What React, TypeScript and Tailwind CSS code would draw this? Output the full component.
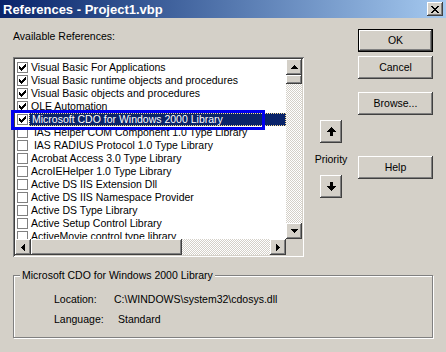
import React from "react";

// tiny pixel-art glyphs drawn as svg rects
function Pix({ rows, color = "#000", className = "" }: { rows: string[]; color?: string; className?: string }) {
  const w = rows[0].length;
  const h = rows.length;
  const rects: React.ReactNode[] = [];
  rows.forEach((r, y) =>
    r.split("").forEach((c, x) => {
      if (c === "X") rects.push(<rect key={x + "-" + y} x={x} y={y} width={1} height={1} fill={color} />);
    })
  );
  return (
    <svg width={w} height={h} viewBox={`0 0 ${w} ${h}`} shapeRendering="crispEdges" className={className}>
      {rects}
    </svg>
  );
}

const CLOSE = ["XX....XX", ".XX..XX.", "..XXXX..", "...XX...", "..XXXX..", ".XX..XX.", "XX....XX"];
const CHECK = ["......X", ".....XX", "X...XXX", "XX.XXX.", "XXXXX..", ".XXX...", "..X...."];
const UP = ["...X...", "..XXX..", ".XXXXX.", "XXXXXXX"];
const DOWN = ["XXXXXXX", ".XXXXX.", "..XXX..", "...X..."];
const LEFT = ["...X", "..XX", ".XXX", "XXXX", ".XXX", "..XX", "...X"];
const RIGHT = ["X...", "XX..", "XXX.", "XXXX", "XXX.", "XX..", "X..."];
const BIG_UP = ["....X....", "...XXX...", "..XXXXX..", ".XXXXXXX.", "XXXXXXXXX", "...XXX...", "...XXX...", "...XXX...", "...XXX..."];
const BIG_DOWN = [...BIG_UP].reverse();

const raised =
  "bg-[#d4d0c8] shadow-[inset_-1px_-1px_0_#404040,inset_1px_1px_0_#ffffff,inset_-2px_-2px_0_#808080,inset_2px_2px_0_#d4d0c8]";
const sunken =
  "shadow-[inset_1px_1px_0_#808080,inset_-1px_-1px_0_#ffffff,inset_2px_2px_0_#404040,inset_-2px_-2px_0_#d4d0c8]";
const checker = "bg-[repeating-conic-gradient(#ffffff_0_25%,#d4d0c8_0_50%)] bg-[length:2px_2px]";

function Button({ label, isDefault }: { label: string; isDefault?: boolean }) {
  if (isDefault) {
    return (
      <div className="h-[23px] w-[75px] border border-black">
        <div className={`h-full w-full flex items-center justify-center ${raised}`}>{label}</div>
      </div>
    );
  }
  return <div className={`h-[23px] w-[75px] flex items-center justify-center ${raised}`}>{label}</div>;
}

const items: { text: string; checked?: boolean; selected?: boolean }[] = [
  { text: "Visual Basic For Applications", checked: true },
  { text: "Visual Basic runtime objects and procedures", checked: true },
  { text: "Visual Basic objects and procedures", checked: true },
  { text: "OLE Automation", checked: true },
  { text: "Microsoft CDO for Windows 2000 Library", checked: true, selected: true },
  { text: "\u00a0IAS Helper COM Component 1.0 Type Library" },
  { text: "\u00a0IAS RADIUS Protocol 1.0 Type Library" },
  { text: "Acrobat Access 3.0 Type Library" },
  { text: "AcroIEHelper 1.0 Type Library" },
  { text: "Active DS IIS Extension Dll" },
  { text: "Active DS IIS Namespace Provider" },
  { text: "Active DS Type Library" },
  { text: "Active Setup Control Library" },
  { text: "ActiveMovie control type library" },
];

function ListBox() {
  return (
    <div className={`relative w-[291px] h-[200px] bg-white p-[2px] ${sunken}`}>
      <div className="flex h-[180px]">
        <div className="w-[271px] overflow-hidden pt-[2px]">
          {items.map((it, i) => (
            <div key={i} className="h-[13px] flex items-center">
              <div className="ml-[2px] w-[11px] h-[11px] border border-[#808080] bg-white flex items-center justify-center shrink-0">
                {it.checked && <Pix rows={CHECK} />}
              </div>
              <div
                className={`ml-[1px] flex-1 h-[13px] pl-[2px] whitespace-nowrap ${
                  it.selected ? "bg-[#0a246a] text-white border border-dotted border-[#f5db95] leading-[11px]" : ""
                }`}
              >
                {it.text}
              </div>
            </div>
          ))}
        </div>
        {/* vertical scrollbar */}
        <div className="w-[16px] flex flex-col">
          <div className={`h-[16px] flex items-center justify-center ${raised}`}>
            <Pix rows={UP} />
          </div>
          <div className={`h-[9px] ${raised}`} />
          <div className={`flex-1 ${checker}`} />
          <div className={`h-[16px] flex items-center justify-center ${raised}`}>
            <Pix rows={DOWN} />
          </div>
        </div>
      </div>
      {/* horizontal scrollbar */}
      <div className="flex h-[16px]">
        <div className={`w-[16px] flex items-center justify-center ${raised}`}>
          <Pix rows={LEFT} />
        </div>
        <div className={`w-[151px] ${raised}`} />
        <div className={`flex-1 ${checker}`} />
        <div className={`w-[16px] flex items-center justify-center ${raised}`}>
          <Pix rows={RIGHT} />
        </div>
        <div className="w-[16px] bg-[#d4d0c8]" />
      </div>
      {/* annotation highlight around the selected entry */}
      <div className="absolute left-[-2px] top-[53px] w-[254px] h-[20px] border-[3px] border-[#0000f0]" />
    </div>
  );
}

export default function App() {
  return (
    <div className="w-[446px] h-[352px] bg-[#d4d0c8] font-['Liberation_Sans',Arial,sans-serif] text-[10.5px] leading-[13px] text-black overflow-hidden">
      {/* title bar */}
      <div className="h-[18px] flex items-center justify-between bg-gradient-to-r from-[#0a246a] to-[#a6caf0]">
        <div className="pl-[3px] text-white font-bold text-[13px]">References - Project1.vbp</div>
        <div className={`mr-[3px] w-[16px] h-[14px] flex items-center justify-center ${raised}`}>
          <Pix rows={CLOSE} />
        </div>
      </div>

      <div className="flex px-[13px] pt-[11px]">
        <div className="w-[291px] flex flex-col">
          <div className="mt-[1px]">Available References:</div>
          <div className="mt-[14px]">
            <ListBox />
          </div>
        </div>

        <div className="w-[55px] flex flex-col items-center pt-[91px]">
          <div className={`w-[22px] h-[23px] flex items-center justify-center ${raised}`}>
            <Pix rows={BIG_UP} />
          </div>
          <div className="mt-[10px]">Priority</div>
          <div className={`mt-[9px] w-[22px] h-[23px] flex items-center justify-center ${raised}`}>
            <Pix rows={BIG_DOWN} />
          </div>
        </div>

        <div className="w-[75px] flex flex-col">
          <Button label="OK" isDefault />
          <div className="mt-[4px]">
            <Button label="Cancel" />
          </div>
          <div className="mt-[13px]">
            <Button label="Browse..." />
          </div>
          <div className="mt-[41px]">
            <Button label="Help" />
          </div>
        </div>
      </div>

      {/* group box */}
      <div className="relative mx-[13px] mt-[18px] h-[63px] border border-[#808080] shadow-[1px_1px_0_#ffffff,inset_1px_1px_0_#ffffff] pl-[40px] pt-[17px]">
        <div className="absolute top-[-7px] left-[6px] px-[2px] bg-[#d4d0c8]">Microsoft CDO for Windows 2000 Library</div>
        <div className="flex">
          <div className="w-[60px]">Location:</div>
          <div>C:\WINDOWS\system32\cdosys.dll</div>
        </div>
        <div className="flex mt-[7px]">
          <div className="w-[64px]">Language:</div>
          <div>Standard</div>
        </div>
      </div>
    </div>
  );
}
